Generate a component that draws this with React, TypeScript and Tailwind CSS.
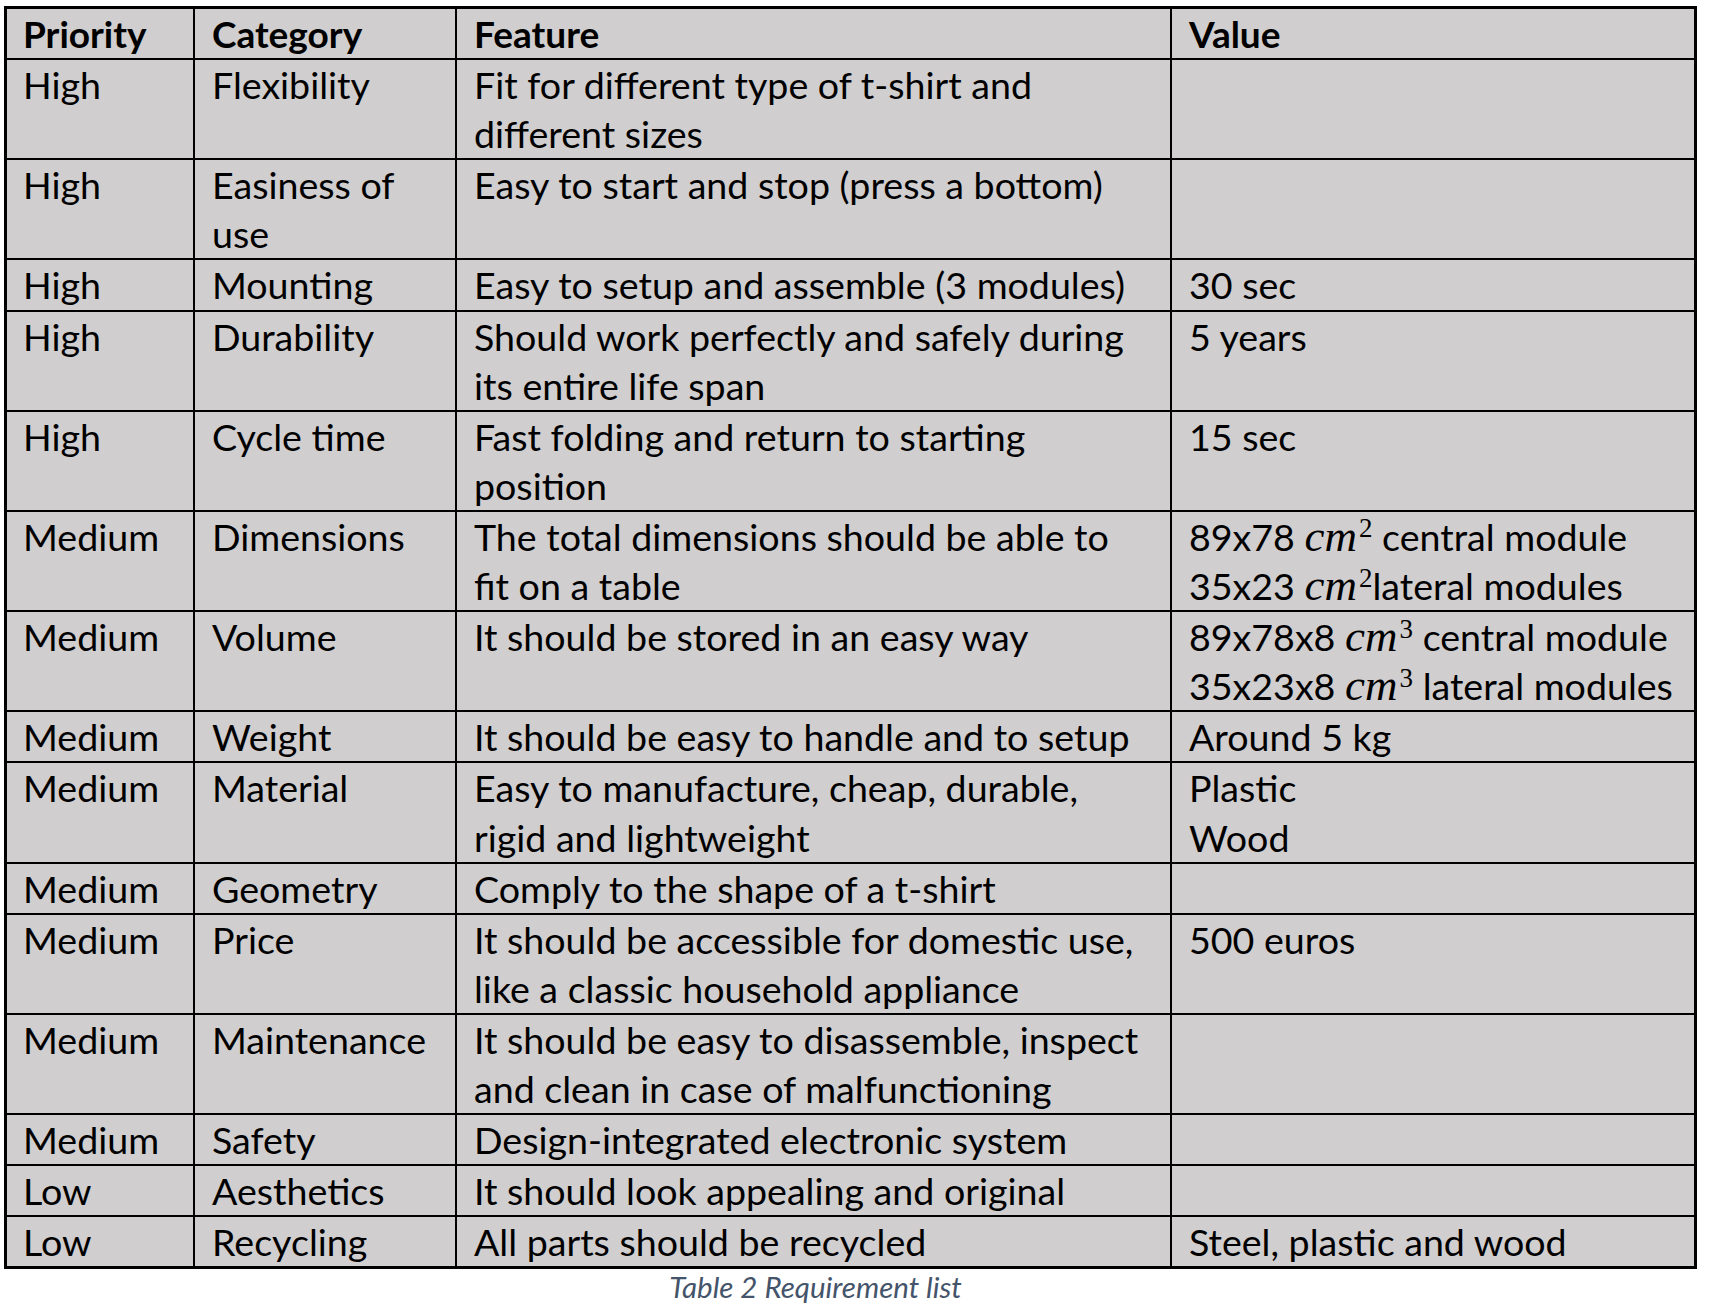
import type { ReactNode } from "react";

type Row = {
  priority: string;
  category: string[];
  feature: string[];
  value: ReactNode[];
};

const Cm = ({ exp }: { exp: string }) => (
  <>
    <span className="font-['Liberation_Serif',serif] text-[45px] italic leading-none">cm</span>
    <sup className="ml-[2px] font-['Liberation_Serif',serif] text-[27px]">{exp}</sup>
  </>
);

const rows: Row[] = [
  { priority: "High", category: ["Flexibility"], feature: ["Fit for different type of t-shirt and", "different sizes"], value: [] },
  { priority: "High", category: ["Easiness of", "use"], feature: ["Easy to start and stop (press a bottom)"], value: [] },
  { priority: "High", category: ["Mounting"], feature: ["Easy to setup and assemble (3 modules)"], value: ["30 sec"] },
  { priority: "High", category: ["Durability"], feature: ["Should work perfectly and safely during", "its entire life span"], value: ["5 years"] },
  { priority: "High", category: ["Cycle time"], feature: ["Fast folding and return to starting", "position"], value: ["15 sec"] },
  {
    priority: "Medium",
    category: ["Dimensions"],
    feature: ["The total dimensions should be able to", "fit on a table"],
    value: [
      <>89x78 <Cm exp="2" /> central module</>,
      <>35x23 <Cm exp="2" />lateral modules</>,
    ],
  },
  {
    priority: "Medium",
    category: ["Volume"],
    feature: ["It should be stored in an easy way"],
    value: [
      <>89x78x8 <Cm exp="3" /> central module</>,
      <>35x23x8 <Cm exp="3" /> lateral modules</>,
    ],
  },
  { priority: "Medium", category: ["Weight"], feature: ["It should be easy to handle and to setup"], value: ["Around 5 kg"] },
  { priority: "Medium", category: ["Material"], feature: ["Easy to manufacture, cheap, durable,", "rigid and lightweight"], value: ["Plastic", "Wood"] },
  { priority: "Medium", category: ["Geometry"], feature: ["Comply to the shape of a t-shirt"], value: [] },
  { priority: "Medium", category: ["Price"], feature: ["It should be accessible for domestic use,", "like a classic household appliance"], value: ["500 euros"] },
  { priority: "Medium", category: ["Maintenance"], feature: ["It should be easy to disassemble, inspect", "and clean in case of malfunctioning"], value: [] },
  { priority: "Medium", category: ["Safety"], feature: ["Design-integrated electronic system"], value: [] },
  { priority: "Low", category: ["Aesthetics"], feature: ["It should look appealing and original"], value: [] },
  { priority: "Low", category: ["Recycling"], feature: ["All parts should be recycled"], value: ["Steel, plastic and wood"] },
];

const Lines = ({ lines }: { lines: ReactNode[] }) => (
  <>
    {lines.map((l, i) => (
      <div key={i}>{l}</div>
    ))}
  </>
);

export default function App() {
  return (
    <div className="min-h-screen bg-white pt-[6px] pl-[4px] font-['Lato',sans-serif] text-black">
      <div className="w-fit">
        <div className="grid grid-cols-[186px_260px_713px_522px] gap-[2px] border-[3px] border-black bg-black text-[37.6px] leading-[49.1px] whitespace-nowrap">
          <div className="bg-[#d0cece] pl-[16px] text-[37px] font-bold">Priority</div>
          <div className="bg-[#d0cece] pl-[17px] text-[37px] font-bold">Category</div>
          <div className="bg-[#d0cece] pl-[17px] text-[37px] font-bold">Feature</div>
          <div className="bg-[#d0cece] pl-[17px] text-[37px] font-bold">Value</div>
          {rows.map((r, i) => (
            <div key={i} className="contents">
              <div className="bg-[#d0cece] pl-[16px]">{r.priority}</div>
              <div className="bg-[#d0cece] pl-[17px]">
                <Lines lines={r.category} />
              </div>
              <div className="bg-[#d0cece] pl-[17px]">
                <Lines lines={r.feature} />
              </div>
              <div className="bg-[#d0cece] pl-[17px]">
                <Lines lines={r.value} />
              </div>
            </div>
          ))}
        </div>
        <p className="pr-[70px] text-center text-[29.5px] leading-[36px] text-[#44546a] italic">
          Table 2 Requirement list
        </p>
      </div>
    </div>
  );
}
